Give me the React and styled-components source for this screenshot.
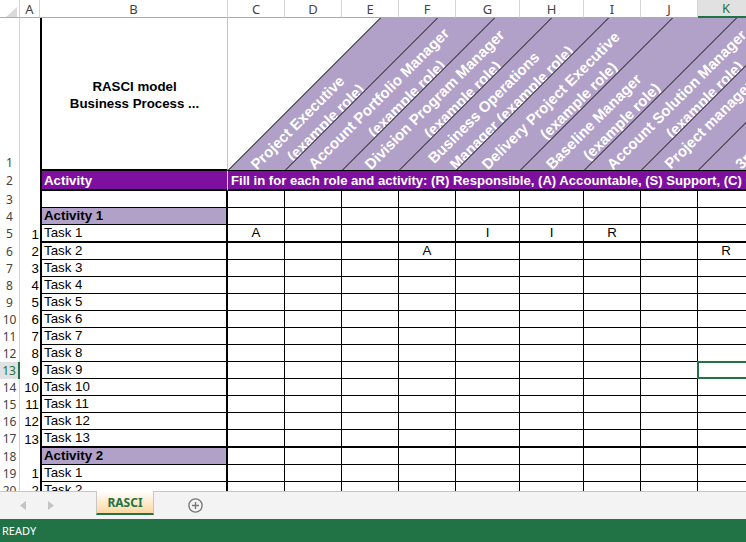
import styled, { createGlobalStyle, css } from "styled-components";

const GREEN = "#217346";
const PURPLE = "#7f0f9f";
const LAVENDER = "#b1a0c7";

const GlobalStyle = createGlobalStyle`
  html, body {
    margin: 0;
    padding: 0;
    background: #fff;
  }
  body {
    font-family: "Liberation Sans", Arial, sans-serif;
  }
`;

const COLS = [
  { id: "C", w: 57 },
  { id: "D", w: 57 },
  { id: "E", w: 57 },
  { id: "F", w: 57 },
  { id: "G", w: 64 },
  { id: "H", w: 64 },
  { id: "I", w: 57 },
  { id: "J", w: 57 },
  { id: "K", w: 57 },
];

// y = centre of the lines inside the band, x = offset of each line from the band edge
const ROLES = [
  { y: 104, lines: [["Project Executive", 20], ["(example role)", 48]] },
  { y: 80, lines: [["Account Portfolio Manager", 20], ["(example role)", 48]] },
  { y: 81, lines: [["Division Program Manager", 20], ["(example role)", 48]] },
  { y: 89, lines: [["Business Operations", 20], ["Manager (example role)", 48]] },
  { y: 82, lines: [["Delivery Project Executive", 23], ["(example role)", 51]] },
  { y: 103, lines: [["Baseline Manager", 23], ["(example role)", 51]] },
  { y: 81, lines: [["Account Solution Manager", 20], ["(example role)", 48]] },
  { y: 106, lines: [["Project manager", 20]] },
  { y: 125, lines: [["3rd party", 34]] },
];

const BODY = [
  { n: 3, h: 17 },
  { n: 4, h: 17, label: "Activity 1", activity: true },
  ...Array.from({ length: 13 }, (_, i) => ({
    n: 5 + i,
    h: i === 0 || i === 12 ? 18 : 17,
    num: i + 1,
    label: `Task ${i + 1}`,
    thick: i === 0 || i === 12,
  })),
  { n: 18, h: 17, label: "Activity 2", activity: true },
  { n: 19, h: 17, num: 1, label: "Task 1" },
  { n: 20, h: 17, num: 2, label: "Task 2" },
];

const MARKS = {
  5: { C: "A", G: "I", H: "I", I: "R" },
  6: { F: "A", K: "R" },
};

const ACTIVE_ROW = 13;
const ACTIVE_COL = "K";

const Window = styled.div`
  width: 746px;
  height: 542px;
  display: flex;
  flex-direction: column;
  overflow: hidden;
  background: #fff;
`;

const Sheet = styled.div`
  flex: 1;
  min-height: 0;
  overflow: hidden;
  display: flex;
  flex-direction: column;
`;

const Row = styled.div`
  display: flex;
  flex-shrink: 0;
  height: ${(p) => p.$h}px;
`;

const Corner = styled.div`
  width: 20px;
  flex-shrink: 0;
  box-sizing: border-box;
  border-right: 1px solid #d4d4d4;
  border-bottom: 1px solid #ababab;
  display: flex;
  align-items: flex-end;
  justify-content: flex-end;
  padding-right: 2px;
  svg {
    display: block;
  }
`;

const ColHead = styled.div`
  width: ${(p) => p.$w}px;
  flex-shrink: 0;
  box-sizing: border-box;
  display: flex;
  align-items: center;
  justify-content: center;
  font-family: "Noto Sans", sans-serif;
  font-size: 13px;
  color: #444;
  border-right: 1px solid #d4d4d4;
  border-bottom: 1px solid #ababab;
  ${(p) =>
    p.$active &&
    css`
      background: #e1e1e1;
      color: ${GREEN};
      border-bottom: 2px solid ${GREEN};
    `}
`;

const RowHead = styled.div`
  width: 20px;
  flex-shrink: 0;
  box-sizing: border-box;
  display: flex;
  justify-content: center;
  align-items: ${(p) => (p.$bottom ? "flex-end" : "center")};
  font-family: "Noto Sans", sans-serif;
  font-size: 12px;
  line-height: 16px;
  color: #444;
  border-right: 1px solid #d4d4d4;
  ${(p) =>
    p.$active &&
    css`
      background: #e1e1e1;
      color: ${GREEN};
      border-right: 2px solid ${GREEN};
    `}
`;

const NumCell = styled.div`
  width: 20px;
  flex-shrink: 0;
  box-sizing: border-box;
  display: flex;
  align-items: flex-end;
  justify-content: flex-end;
  padding: 0 1px 1px 0;
  font-size: 13.3px;
  line-height: 15px;
  color: #000;
`;

const TitleCell = styled.div`
  width: 188px;
  flex-shrink: 0;
  box-sizing: border-box;
  display: flex;
  align-items: center;
  justify-content: center;
  text-align: center;
  padding-top: 3px;
  border-left: 2px solid #000;
  border-right: 1px solid #c6c6c6;
  border-bottom: 2px solid #000;
  font-size: 13.3px;
  font-weight: 700;
  line-height: 17px;
`;

const TaskCell = styled.div`
  width: 188px;
  flex-shrink: 0;
  box-sizing: border-box;
  display: flex;
  align-items: flex-end;
  padding: 0 0 1px 2px;
  border-left: 2px solid #000;
  border-right: ${(p) => p.$divider || "2px solid #000"};
  border-bottom: ${(p) => p.$bottom}px solid #000;
  background: ${(p) => p.$fill || "#fff"};
  color: ${(p) => p.$color || "#000"};
  font-size: 13.3px;
  font-weight: ${(p) => (p.$bold ? 700 : 400)};
  line-height: 15px;
  white-space: nowrap;
`;

const Banner = styled.div`
  flex: 1;
  min-width: 0;
  overflow: hidden;
  white-space: nowrap;
  box-sizing: border-box;
  display: flex;
  align-items: flex-end;
  padding: 0 0 1px 3px;
  background: ${PURPLE};
  border-bottom: 2px solid #000;
  color: #fff;
  font-size: 13.1px;
  font-weight: 700;
  line-height: 15px;
`;

const DataCell = styled.div`
  position: relative;
  width: ${(p) => p.$w}px;
  flex-shrink: 0;
  box-sizing: border-box;
  display: flex;
  align-items: flex-end;
  justify-content: center;
  padding-bottom: 1px;
  border-right: 1px solid #000;
  border-bottom: ${(p) => p.$bottom}px solid #000;
  font-size: 13.3px;
  line-height: 15px;
  ${(p) =>
    p.$selected &&
    css`
      &::after {
        content: "";
        position: absolute;
        left: -1px;
        top: -1px;
        right: -3px;
        bottom: -1px;
        border: 2px solid ${GREEN};
      }
    `}
`;

const RoleHeader = styled.div`
  flex: 1;
  min-width: 0;
  overflow: hidden;
  display: flex;
  box-sizing: border-box;
  border-bottom: 1px solid #000;
  background: #fff;
`;

const Band = styled.div`
  position: relative;
  flex-shrink: 0;
  width: ${(p) => p.$w}px;
  box-sizing: border-box;
  background: ${LAVENDER};
  border-left: 1px solid #000;
  transform: skewX(-45deg);
  transform-origin: 0 100%;
`;

const RoleLine = styled.div`
  position: absolute;
  left: ${(p) => p.$x}px;
  top: ${(p) => p.$y}px;
  width: 0;
  height: 0;
  display: flex;
  align-items: center;
  justify-content: center;
  transform: skewX(45deg) rotate(-45deg);
  transform-origin: 0 0;
  span {
    white-space: nowrap;
    color: #fff;
    font-size: 15px;
    font-weight: 700;
    line-height: 19px;
  }
`;

const TabBar = styled.div`
  height: 28px;
  flex-shrink: 0;
  box-sizing: border-box;
  display: flex;
  align-items: flex-start;
  background: #f3f3f3;
  border-top: 1px solid #c6c6c6;
`;

const NavArrows = styled.div`
  width: 96px;
  height: 26px;
  box-sizing: border-box;
  display: flex;
  align-items: center;
  gap: 22px;
  padding-left: 20px;
  svg {
    display: block;
  }
`;

const SheetTab = styled.div`
  margin-top: -1px;
  width: 58px;
  height: 24px;
  box-sizing: border-box;
  display: flex;
  align-items: center;
  justify-content: center;
  background: linear-gradient(#ffffff, #fcd7a0);
  border-left: 1px solid #c6c6c6;
  border-right: 1px solid #c6c6c6;
  border-bottom: 2px solid ${GREEN};
  color: ${GREEN};
  font-family: "Noto Sans", sans-serif;
  font-size: 12px;
  font-weight: 700;
`;

const AddSheet = styled.div`
  align-self: center;
  margin-left: 34px;
  display: flex;
  svg {
    display: block;
  }
`;

const StatusBar = styled.div`
  height: 23px;
  flex-shrink: 0;
  display: flex;
  align-items: center;
  padding-left: 2px;
  background: ${GREEN};
  color: #fff;
  font-family: "Noto Sans", sans-serif;
  font-size: 11px;
`;

function BodyRow({ row }) {
  const bottom = row.thick ? 2 : 1;
  const marks = MARKS[row.n] || {};
  return (
    <Row $h={row.h}>
      <RowHead $active={row.n === ACTIVE_ROW}>{row.n}</RowHead>
      <NumCell>{row.num}</NumCell>
      <TaskCell
        $bottom={bottom}
        $bold={row.activity}
        $fill={row.activity ? LAVENDER : "#fff"}
      >
        {row.label}
      </TaskCell>
      {COLS.map((c) => (
        <DataCell
          key={c.id}
          $w={c.w}
          $bottom={bottom}
          $selected={row.n === ACTIVE_ROW && c.id === ACTIVE_COL}
        >
          {marks[c.id]}
        </DataCell>
      ))}
    </Row>
  );
}

export default function App() {
  return (
    <Window>
      <GlobalStyle />
      <Sheet>
        <Row $h={18}>
          <Corner>
            <svg width="11" height="10" viewBox="0 0 11 10">
              <polygon points="11,0 11,10 0,10" fill="#dadada" />
            </svg>
          </Corner>
          <ColHead $w={20}>A</ColHead>
          <ColHead $w={188}>B</ColHead>
          {COLS.map((c) => (
            <ColHead key={c.id} $w={c.w} $active={c.id === ACTIVE_COL}>
              {c.id}
            </ColHead>
          ))}
        </Row>

        <Row $h={153}>
          <RowHead $bottom>1</RowHead>
          <NumCell />
          <TitleCell>
            RASCI model
            <br />
            Business Process ...
          </TitleCell>
          <RoleHeader>
            {ROLES.map((role, i) => (
              <Band key={i} $w={COLS[i].w}>
                {role.lines.map(([text, x]) => (
                  <RoleLine key={text} $x={x} $y={role.y}>
                    <span>{text}</span>
                  </RoleLine>
                ))}
              </Band>
            ))}
          </RoleHeader>
        </Row>

        <Row $h={20}>
          <RowHead>2</RowHead>
          <NumCell />
          <TaskCell
            $bottom={2}
            $bold
            $fill={PURPLE}
            $color="#fff"
            $divider="1px solid #d9d9d9"
          >
            Activity
          </TaskCell>
          <Banner>
            Fill in for each role and activity: (R) Responsible, (A) Accountable, (S)
            Support, (C) Consulted, (I) Informed
          </Banner>
        </Row>

        {BODY.map((row) => (
          <BodyRow key={row.n} row={row} />
        ))}
      </Sheet>

      <TabBar>
        <NavArrows>
          <svg width="6" height="9" viewBox="0 0 6 9">
            <polygon points="6,0 6,9 0,4.5" fill="#c3c3c3" />
          </svg>
          <svg width="6" height="9" viewBox="0 0 6 9">
            <polygon points="0,0 0,9 6,4.5" fill="#c3c3c3" />
          </svg>
        </NavArrows>
        <SheetTab>RASCI</SheetTab>
        <AddSheet>
          <svg width="15" height="15" viewBox="0 0 15 15">
            <circle cx="7.5" cy="7.5" r="6.6" fill="none" stroke="#777" strokeWidth="1.3" />
            <path d="M7.5 4v7M4 7.5h7" stroke="#777" strokeWidth="1.4" />
          </svg>
        </AddSheet>
      </TabBar>

      <StatusBar>READY</StatusBar>
    </Window>
  );
}
